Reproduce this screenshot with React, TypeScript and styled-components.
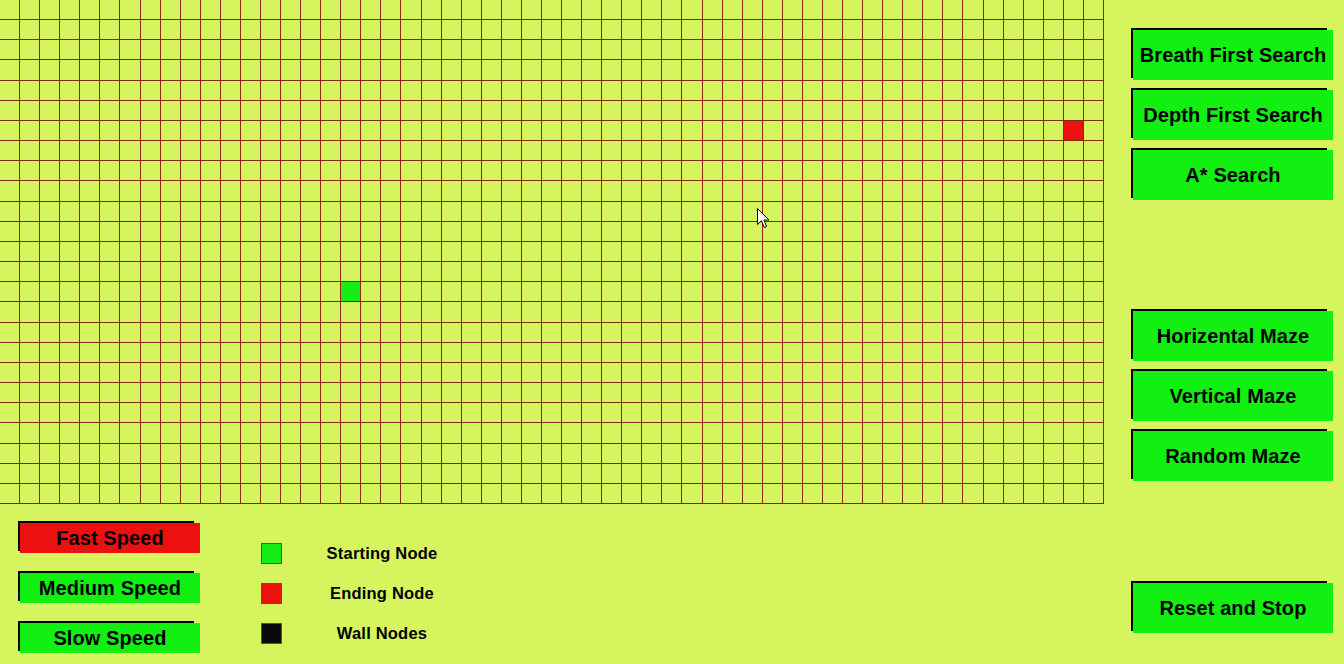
import React from "react";
import styled, { createGlobalStyle } from "styled-components";

const COLS = 55;
const ROWS = 25;
const BOARD_W = 1104;
const BOARD_H = 504;
const START = { r: 14, c: 17 };
const END = { r: 6, c: 53 };

const tracks = (count: number, total: number) => {
  const out: string[] = [];
  let prev = 0;
  for (let i = 1; i <= count; i++) {
    const edge = Math.round((i * total) / count);
    out.push(`${edge - prev}px`);
    prev = edge;
  }
  return out.join(" ");
};

const COL_TRACKS = tracks(COLS, BOARD_W);
const ROW_TRACKS = tracks(ROWS, BOARD_H);

const GlobalStyle = createGlobalStyle`
  html {
    background: #d6f45e;
  }
  body {
    margin: 0;
    padding: 0;
    font-family: "Liberation Sans", Arial, Helvetica, sans-serif;
    overflow: hidden;
  }
  #root {
    width: 1344px;
    height: 664px;
  }
`;

const Page = styled.div`
  position: relative;
  isolation: isolate;
  display: flex;
  flex-direction: row;
  width: 1344px;
  height: 664px;
`;

const LeftColumn = styled.div`
  display: flex;
  flex-direction: column;
  width: ${BOARD_W}px;
`;

const Board = styled.div`
  display: grid;
  grid-template-columns: ${COL_TRACKS};
  grid-template-rows: ${ROW_TRACKS};
  width: ${BOARD_W}px;
  height: ${BOARD_H}px;
`;

type CellKind = "empty" | "start" | "end";

const Cell = styled.div<{ $kind: CellKind }>`
  box-sizing: border-box;
  border-right: 1px solid #962410;
  border-bottom: 1px solid #7c2a10;
  background: ${(p) =>
    p.$kind === "start" ? "#14ee14" : p.$kind === "end" ? "#ec1010" : "transparent"};
`;

const BottomPanel = styled.div`
  display: flex;
  flex-direction: row;
  padding: 19px 0 0 20px;
`;

const SpeedColumn = styled.div`
  display: flex;
  flex-direction: column;
  gap: 20px;
  width: 180px;
`;

const ShadowButton = styled.div<{ $w: number; $h: number; $color: string }>`
  position: relative;
  box-sizing: border-box;
  width: ${(p) => p.$w}px;
  height: ${(p) => p.$h}px;
  background: ${(p) => p.$color};
  color: #000;
  font-weight: bold;
  font-size: 20px;
  letter-spacing: 0.1px;
  display: flex;
  align-items: center;
  justify-content: center;
  white-space: nowrap;
  &::before {
    content: "";
    position: absolute;
    left: -2px;
    top: -2px;
    width: calc(100% - 4px);
    height: 100%;
    background: #000;
    z-index: -1;
  }
`;

const Legend = styled.div`
  display: flex;
  flex-direction: column;
  gap: 20px;
  margin-left: 61px;
  padding-top: 20px;
`;

const LegendRow = styled.div`
  display: flex;
  flex-direction: row;
  align-items: center;
  height: 20px;
`;

const Swatch = styled.div<{ $color: string }>`
  box-sizing: border-box;
  width: 21px;
  height: 21px;
  background: ${(p) => p.$color};
  border: 1px solid #6a5410;
`;

const LegendLabel = styled.span`
  width: 200px;
  text-align: center;
  font-size: 16.5px;
  font-weight: bold;
  letter-spacing: 0.2px;
  color: #000;
`;

const RightColumn = styled.div`
  display: flex;
  flex-direction: column;
  padding: 30px 0 0 29px;
`;

const ButtonGroup = styled.div<{ $mt: number }>`
  display: flex;
  flex-direction: column;
  gap: 10px;
  margin-top: ${(p) => p.$mt}px;
`;

const Cursor = styled.svg`
  position: absolute;
  left: 757px;
  top: 208px;
`;

const GREEN = "#12f012";
const RED = "#ec1010";

export default function App() {
  const cells: React.ReactNode[] = [];
  for (let r = 0; r < ROWS; r++) {
    for (let c = 0; c < COLS; c++) {
      let kind: CellKind = "empty";
      if (r === START.r && c === START.c) kind = "start";
      if (r === END.r && c === END.c) kind = "end";
      cells.push(<Cell key={`${r}-${c}`} $kind={kind} />);
    }
  }

  return (
    <>
      <GlobalStyle />
      <Page>
        <LeftColumn>
          <Board>{cells}</Board>
          <BottomPanel>
            <SpeedColumn>
              <ShadowButton $w={180} $h={30} $color={RED}>Fast Speed</ShadowButton>
              <ShadowButton $w={180} $h={30} $color={GREEN}>Medium Speed</ShadowButton>
              <ShadowButton $w={180} $h={30} $color={GREEN}>Slow Speed</ShadowButton>
            </SpeedColumn>
            <Legend>
              <LegendRow>
                <Swatch $color="#14ee14" />
                <LegendLabel>Starting Node</LegendLabel>
              </LegendRow>
              <LegendRow>
                <Swatch $color="#ec1010" />
                <LegendLabel>Ending Node</LegendLabel>
              </LegendRow>
              <LegendRow>
                <Swatch $color="#0a0a0a" />
                <LegendLabel>Wall Nodes</LegendLabel>
              </LegendRow>
            </Legend>
          </BottomPanel>
        </LeftColumn>
        <RightColumn>
          <ButtonGroup $mt={0}>
            <ShadowButton $w={200} $h={50} $color={GREEN}>Breath First Search</ShadowButton>
            <ShadowButton $w={200} $h={50} $color={GREEN}>Depth First Search</ShadowButton>
            <ShadowButton $w={200} $h={50} $color={GREEN}>A* Search</ShadowButton>
          </ButtonGroup>
          <ButtonGroup $mt={111}>
            <ShadowButton $w={200} $h={50} $color={GREEN}>Horizental Maze</ShadowButton>
            <ShadowButton $w={200} $h={50} $color={GREEN}>Vertical Maze</ShadowButton>
            <ShadowButton $w={200} $h={50} $color={GREEN}>Random Maze</ShadowButton>
          </ButtonGroup>
          <ButtonGroup $mt={102}>
            <ShadowButton $w={200} $h={50} $color={GREEN}>Reset and Stop</ShadowButton>
          </ButtonGroup>
        </RightColumn>
        <Cursor width="13" height="21" viewBox="0 0 13 21">
          <path
            d="M0.5 0.5 L0.5 16.5 L4.5 12.8 L7.3 19.5 L9.6 18.5 L6.9 12 L12 12 Z"
            fill="#ffffff"
            stroke="#000000"
            strokeWidth="1"
            strokeLinejoin="miter"
          />
        </Cursor>
      </Page>
    </>
  );
}
